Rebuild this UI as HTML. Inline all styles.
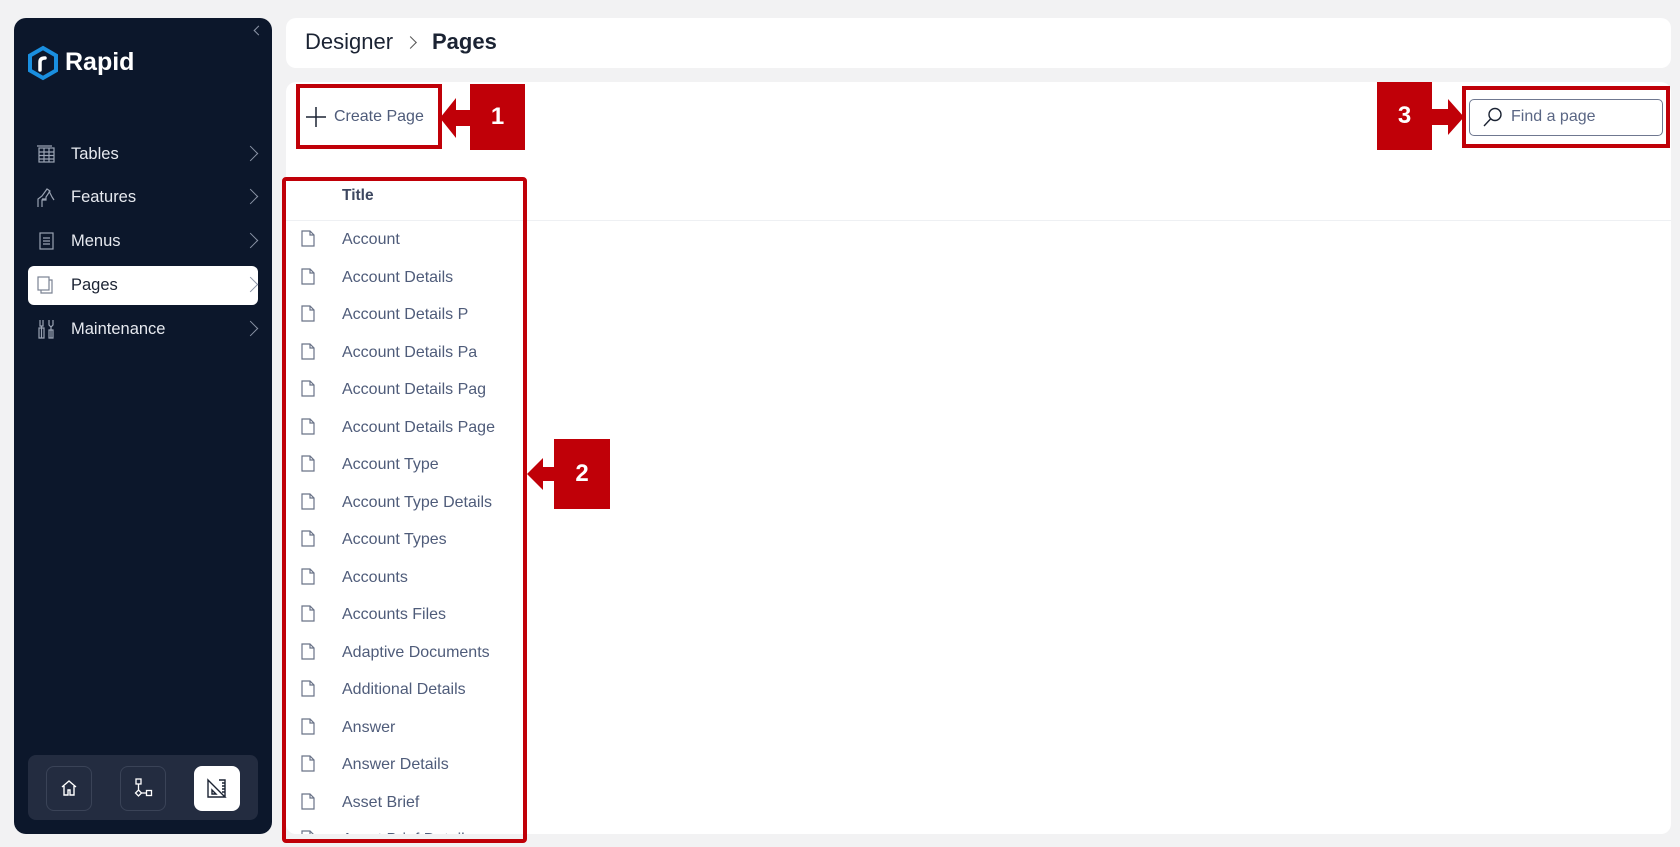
<!DOCTYPE html>
<html><head><meta charset="utf-8"><style>
*{box-sizing:border-box;margin:0;padding:0}
body{width:1680px;height:847px;background:#f2f2f3;font-family:"Liberation Sans",sans-serif;position:relative;overflow:hidden}
.a{position:absolute}
.sb{left:14px;top:18px;width:258px;height:816px;background:#0c172b;border-radius:12px}
.nav{left:14px;width:244px;height:40px;color:#e6e9ef;font-size:16.5px;display:flex;align-items:center}
.nav .t{position:absolute;left:57px}
.nav .c{position:absolute;left:231px;top:14px;width:11px;height:11px;border-right:1.2px solid #8a93a5;border-top:1.2px solid #8a93a5;transform:rotate(45deg)}
.nav svg{position:absolute;left:22px}
.row{left:286px;width:240px;height:37.5px;color:#4f5c7a;font-size:16px}
.row span{position:absolute;left:56px;top:9px}
.row svg{position:absolute;left:15px;top:8px}
.red{border:4px solid #c00008}
.rb{background:#c00008;color:#fff;font-weight:bold;font-size:24px;display:flex;align-items:center;justify-content:center}
</style></head><body>
<div class="a sb"></div>
<div class="a" style="left:255px;top:27px;width:7px;height:7px;border-left:1.3px solid #8a93a5;border-bottom:1.3px solid #8a93a5;transform:rotate(45deg)"></div>
<svg class="a" style="left:26px;top:45px" width="34" height="36" viewBox="0 0 34 36"><path d="M17 3 L30 10.5 L30 25.5 L17 33 L4 25.5 L4 10.5 Z" fill="none" stroke="#1a8fe0" stroke-width="4"/><path d="M14 25 V17 Q14 13 19 13" fill="none" stroke="#fff" stroke-width="3.5" stroke-linecap="round"/></svg>
<div class="a" style="left:65px;top:48px;color:#fff;font-weight:bold;font-size:25px">Rapid</div>

<div class="a nav" style="top:134px"><svg width="20" height="20" viewBox="0 0 20 20" fill="none" stroke="#9aa3b3" stroke-width="1.2"><rect x="3" y="4" width="15" height="14"/><path d="M3 8h15M3 11.5h15M3 15h15M8 4v14M13 4v14M1 2h15"/></svg><span class="t">Tables</span><i class="c"></i></div>
<div class="a nav" style="top:177px"><svg width="20" height="22" viewBox="0 0 20 22" fill="none" stroke="#9aa3b3" stroke-width="1.2"><path d="M2 21V13l4-3 5-7 3 2-4 6v3H6v7M13 5l3 6 2 3M6 13h4"/></svg><span class="t">Features</span><i class="c"></i></div>
<div class="a nav" style="top:221px"><svg width="20" height="20" viewBox="0 0 20 20" fill="none" stroke="#9aa3b3" stroke-width="1.2"><rect x="4" y="2" width="13" height="16"/><path d="M7 7h7M7 10h7M7 13h7"/></svg><span class="t">Menus</span><i class="c"></i></div>
<div class="a" style="left:28px;top:266px;width:230px;height:39px;background:#fff;border-radius:6px"></div>
<div class="a nav" style="top:265px;color:#1b2333"><svg width="20" height="20" viewBox="0 0 20 20" fill="none" stroke="#7a8292" stroke-width="1.2"><rect x="2" y="2" width="11" height="13"/><path d="M5 15v3h11V5h-3M16 5v13"/></svg><span class="t">Pages</span><i class="c"></i></div>
<div class="a nav" style="top:309px"><svg width="20" height="22" viewBox="0 0 20 22" fill="none" stroke="#9aa3b3" stroke-width="1.2"><path d="M4 2v6h3V2M5.5 8v12M13 2v5l2 2 2-2V2M15 9v11M3 10h5v10H3zM13 12h4v8h-4z"/></svg><span class="t">Maintenance</span><i class="c"></i></div>

<div class="a" style="left:28px;top:755px;width:230px;height:65px;background:#232c40;border-radius:8px"></div>
<div class="a" style="left:46px;top:766px;width:46px;height:45px;border:1px solid #3a4357;border-radius:8px"></div>
<svg class="a" style="left:59px;top:778px" width="20" height="20" viewBox="0 0 20 20" fill="none" stroke="#fff" stroke-width="1.4"><path d="M3 9L10 3l7 6M5 8v9h4v-5h2v5h4V8"/></svg>
<div class="a" style="left:120px;top:766px;width:46px;height:45px;border:1px solid #3a4357;border-radius:8px"></div>
<svg class="a" style="left:133px;top:777px" width="20" height="22" viewBox="0 0 20 22" fill="none" stroke="#fff" stroke-width="1.3"><rect x="3" y="2" width="5" height="5"/><path d="M5.5 7v6"/><path d="M5.5 13l3 3-3 3-3-3z"/><path d="M8.5 16h5"/><rect x="13.5" y="13.5" width="5" height="5"/></svg>
<div class="a" style="left:194px;top:766px;width:46px;height:45px;background:#fff;border-radius:8px"></div>
<svg class="a" style="left:206px;top:778px" width="22" height="22" viewBox="0 0 22 22" fill="none" stroke="#1b2333" stroke-width="1.4"><path d="M2 2L19 19H2z M6 12l4 4H6z M13 2h6v17M16 5h3M16 8h3M16 11h3M16 14h3"/></svg>

<div class="a" style="left:286px;top:18px;width:1385px;height:50px;background:#fff;border-radius:10px"></div>
<div class="a" style="left:305px;top:29px;font-size:22px;color:#1b2333">Designer</div>
<div class="a" style="left:406px;top:38px;width:9px;height:9px;border-right:1.3px solid #555;border-top:1.3px solid #555;transform:rotate(45deg)"></div>
<div class="a" style="left:432px;top:29px;font-size:22px;font-weight:bold;color:#1b2333">Pages</div>

<div class="a" style="left:286px;top:82px;width:1385px;height:752px;background:#fff;border-radius:10px"></div>
<div class="a" style="left:286px;top:220px;width:1385px;height:1px;background:#eef0f3"></div>
<svg class="a" style="left:305px;top:106px" width="22" height="22" viewBox="0 0 22 22" stroke="#1b2333" stroke-width="1.5"><path d="M11 1v20M1 11h20"/></svg>
<div class="a" style="left:334px;top:108px;font-size:16px;color:#4f5c7a">Create Page</div>
<div class="a red" style="left:296px;top:84px;width:146px;height:65px"></div>
<svg class="a" style="left:440px;top:92px" width="32" height="52" viewBox="0 0 32 52"><path d="M0 26L16 6v12h16v16H16v12z" fill="#c00008"/></svg>
<div class="a rb" style="left:470px;top:84px;width:55px;height:66px">1</div>

<div class="a" style="left:342px;top:187px;font-size:15.5px;font-weight:bold;color:#3d4760">Title</div>

<div id="rows"></div>
<div class="a red" style="left:282px;top:177px;width:245px;height:666px;border-radius:4px"></div>
<svg class="a" style="left:527px;top:458px" width="30" height="32" viewBox="0 0 30 32"><path d="M0 16L16 0v9h14v14H16v9z" fill="#c00008"/></svg>
<div class="a rb" style="left:554px;top:439px;width:56px;height:70px">2</div>

<div class="a rb" style="left:1377px;top:82px;width:55px;height:68px">3</div>
<svg class="a" style="left:1430px;top:99px" width="34" height="36" viewBox="0 0 34 36"><path d="M34 18L18 0v10H0v16h18v10z" fill="#c00008"/></svg>
<div class="a red" style="left:1462px;top:86px;width:208px;height:62px"></div>
<div class="a" style="left:1469px;top:99px;width:194px;height:37px;border:1.3px solid #6f7890;border-radius:5px"></div>
<svg class="a" style="left:1482px;top:106px" width="22" height="22" viewBox="0 0 22 22" fill="none" stroke="#1b2333" stroke-width="1.4"><circle cx="13" cy="8.5" r="6"/><path d="M8.5 13L2 20"/></svg>
<div class="a" style="left:1511px;top:108px;font-size:16px;color:#5a6684">Find a page</div>

<script>
var n=["Account","Account Details","Account Details P","Account Details Pa","Account Details Pag","Account Details Page","Account Type","Account Type Details","Account Types","Accounts","Accounts Files","Adaptive Documents","Additional Details","Answer","Answer Details","Asset Brief","Asset Brief Details"];
var h="";n.forEach(function(t,i){var y=222+i*37.5;if(y>830)return;h+='<div class="a row" style="top:'+y+'px;'+(y+37>834?'height:'+(834-y)+'px;overflow:hidden':'')+'"><svg width="14" height="17" viewBox="0 0 14 17" fill="none" stroke="#6a7388" stroke-width="1.2"><path d="M1 1h8l4 4v11H1z M9 1v4h4"/></svg><span>'+t+'</span></div>';});
document.getElementById("rows").outerHTML=h;
</script>
</body></html>
